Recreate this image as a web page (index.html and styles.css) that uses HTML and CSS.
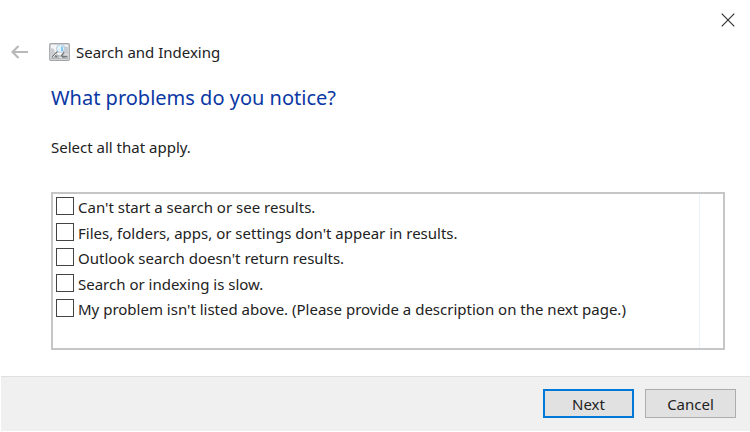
FILE: index.html
```html
<!DOCTYPE html>
<html lang="en">
<head>
<meta charset="utf-8">
<title>Search and Indexing</title>
<link rel="stylesheet" href="styles.css">
</head>
<body>
<main class="wizard">
  <div class="caption">
    <button class="icon-button" type="button" aria-label="Close">
      <svg width="14" height="14" viewBox="0 0 14 14"><path d="M.7.7l12.6 12.6M13.3.7L.7 13.3" fill="none" stroke="#333" stroke-width="1.2"/></svg>
    </button>
  </div>
  <header class="titlebar">
    <button class="icon-button" type="button" aria-label="Back">
      <svg width="18" height="14" viewBox="0 0 18 14"><path d="M1.5 7H17M7.5 1L1.5 7l6 6" fill="none" stroke="#b9b9b9" stroke-width="2.2"/></svg>
    </button>
    <svg class="app-icon" width="21" height="18" viewBox="0 0 21 18" aria-hidden="true">
      <rect x=".7" y=".7" width="19.6" height="16.6" rx="1" fill="#e3e4e5" stroke="#a3a5a8" stroke-width="1.2"/>
      <path d="M2 2h17v10H2z" fill="#f3f4f5"/>
      <path d="M2 5l3 1 1 4-4 3zM15 3l4 1v8l-4-2z" fill="#c9ccd0"/>
      <path d="M2 15l5-4 5 2 3-3 4 3v3H2z" fill="#b4b7ba"/>
      <circle cx="11.5" cy="5.5" r="4" fill="#e3f3fc" stroke="#b4c9d8"/>
      <path d="M12 3l2 1v4h-2z" fill="#85caf0"/>
      <path d="M8.5 8.5L3 14M5 12l3 2M12 12l2 2 4-1M15 9l-2 3" fill="none" stroke="#75787b" stroke-width="1.3"/>
      <path d="M4 14l3-3M10 14l3 1M15 12l3 0" stroke="#fff" stroke-width=".8"/>
    </svg>
    <span>Search and Indexing</span>
  </header>
  <section class="content">
    <h1>What problems do you notice?</h1>
    <p>Select all that apply.</p>
    <div class="list">
      <div class="options">
        <label><input type="checkbox"><span>Can't start a search or see results.</span></label>
        <label><input type="checkbox"><span>Files, folders, apps, or settings don't appear in results.</span></label>
        <label><input type="checkbox"><span>Outlook search doesn't return results.</span></label>
        <label><input type="checkbox"><span>Search or indexing is slow.</span></label>
        <label><input type="checkbox"><span>My problem isn't listed above. (Please provide a description on the next page.)</span></label>
      </div>
      <div class="gutter"></div>
    </div>
  </section>
  <footer class="actions">
    <button class="button primary" type="button">Next</button>
    <button class="button" type="button">Cancel</button>
  </footer>
</main>
</body>
</html>
```
FILE: styles.css
```css
* { box-sizing: border-box; }

body {
  margin: 0;
  background: #fff;
  color: #222;
  font: 15px/20px "Noto Sans", sans-serif;
}

.wizard {
  display: flex;
  flex-direction: column;
  min-height: 100vh;
  padding: 0 0 1px 1px;
}

.caption {
  display: flex;
  justify-content: flex-end;
  padding: 13px 15px 0 0;
}

.icon-button {
  display: flex;
  padding: 0;
  border: 0;
  background: none;
}

.titlebar {
  display: flex;
  align-items: center;
  margin-top: 15px;
  padding-left: 10px;
}

.app-icon { margin: 0 6px 0 20px; }

.content { padding: 22px 25px 26px 50px; }

h1 {
  margin: 0;
  color: #0a38a4;
  font-size: 20px;
  font-weight: 400;
  line-height: 28px;
}

p { margin: 25px 0 35px; }

.list {
  display: flex;
  height: 158px;
  border: 2px solid #c6c6c6;
}

.options {
  display: flex;
  flex: 1;
  flex-direction: column;
  justify-content: space-between;
  height: 120px;
  margin: 3px 0 0 3px;
}

label {
  display: flex;
  align-items: center;
  gap: 4px;
  height: 18px;
}

input {
  appearance: none;
  width: 18px;
  height: 18px;
  margin: 0;
  border: 1px solid #444;
  background: #fff;
}

input:checked { background: #0078d7; }

label span { padding-top: 2px; }

.gutter {
  width: 24px;
  border-left: 1px solid #e8f2fa;
}

.actions {
  display: flex;
  flex: 1;
  align-items: flex-start;
  justify-content: flex-end;
  gap: 11px;
  padding: 12px 14px 0;
  border-top: 1px solid #dfdfdf;
  background: #f0f0f0;
}

.button {
  width: 91px;
  height: 29px;
  padding: 0;
  border: 1px solid #adadad;
  background: #e1e1e1;
  color: #222;
  font: inherit;
}

.primary { border: 2px solid #0078d7; }
```
